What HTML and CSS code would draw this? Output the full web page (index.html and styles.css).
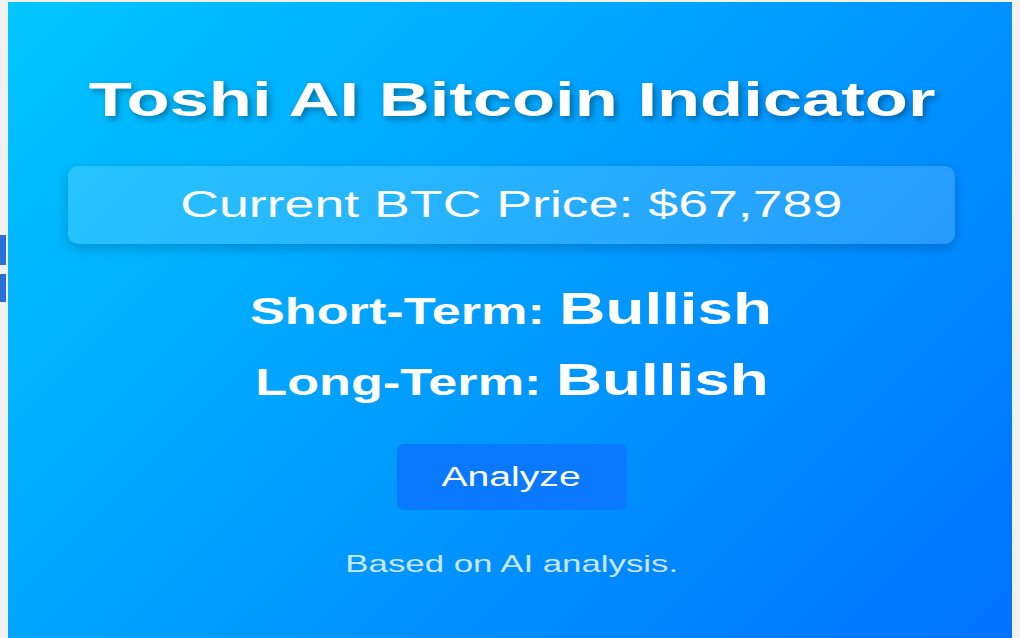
FILE: index.html
```html
<!DOCTYPE html>
<html>
<head>
<meta charset="utf-8">
<link rel="stylesheet" href="styles.css">
</head>
<body>
<div class="frame">
  <div class="side side-left">
    <span class="tab tab-a"></span>
    <span class="tab tab-b"></span>
  </div>
  <main class="popup">
    <h1 class="title wide">Toshi AI Bitcoin Indicator</h1>
    <div class="price"><span class="wide">Current BTC Price: $67,789</span></div>
    <div class="trend trend-first wide"><span class="label">Short-Term:</span> <span class="value">Bullish</span></div>
    <div class="trend trend-second wide"><span class="label">Long-Term:</span> <span class="value">Bullish</span></div>
    <button class="analyze"><span class="wide">Analyze</span></button>
    <p class="note wide">Based on AI analysis.</p>
  </main>
  <div class="side side-right"></div>
</div>
</body>
</html>
```

FILE: styles.css
```css
html, body {
  margin: 0;
  padding: 0;
  width: 1020px;
  height: 638px;
  overflow: hidden;
  background: #f1f1f1;
  font-family: "Liberation Sans", Arial, sans-serif;
}
.frame {
  display: flex;
  height: 638px;
}
.side {
  width: 8px;
  flex: none;
  background: #f1f1f1;
  position: relative;
}
.tab {
  position: absolute;
  left: 0;
  width: 6px;
  background: #2a6fd6;
}
.tab-a { top: 235px; height: 30px; }
.tab-b { top: 274px; height: 28px; }
.popup {
  flex: 1;
  margin-top: 2px;
  background: linear-gradient(135deg, #00c6ff 0%, #0072ff 100%);
  display: flex;
  flex-direction: column;
  align-items: center;
  color: #fff;
  padding: 0 57px 0 60px;
}
.wide {
  display: inline-block;
  transform: scaleX(1.45);
  transform-origin: center;
  white-space: nowrap;
}
.title {
  margin: 72px 0 0;
  font-size: 48px;
  font-weight: bold;
  text-shadow: 2px 3px 5px rgba(0,0,0,0.35);
  line-height: 52px;
  transform: scaleX(1.47);
}
.price {
  margin-top: 40px;
  align-self: stretch;
  height: 78px;
  display: flex;
  align-items: center;
  justify-content: center;
  background: rgba(255,255,255,0.15);
  border-radius: 10px;
  box-shadow: 0 4px 12px rgba(0,0,0,0.2);
  font-size: 37px;
}
.trend {
  font-weight: bold;
  font-size: 36px;
  line-height: 50px;
}
.trend-first { margin-top: 40px; }
.trend-second { margin-top: 18px; }
.value { font-size: 44px; }
.analyze {
  margin-top: 36px;
  width: 230px;
  height: 66px;
  border: none;
  border-radius: 8px;
  background: #0a78ff;
  color: #fff;
  font-family: "Liberation Sans", Arial, sans-serif;
  font-size: 27px;
  padding: 0;
}
.note {
  margin: 40px 0 0;
  font-size: 24px;
  color: rgba(255,255,255,0.8);
}
```
